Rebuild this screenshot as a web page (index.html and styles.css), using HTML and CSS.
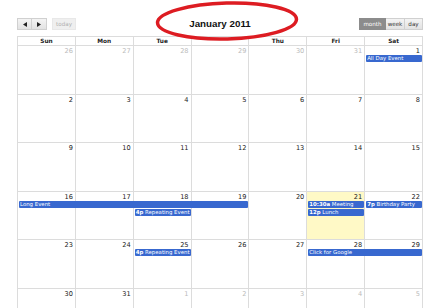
FILE: index.html
```html
<!DOCTYPE html>
<html lang="en">
<head>
    <meta charset="UTF-8">
    <title>Calendar</title>
    <link rel="stylesheet" href="styles.css">
</head>
<body>
    <div class="calendar">
        <div class="toolbar">
            <div class="toolbar-left">
                <span class="btn-group">
                    <span class="btn"><svg width="4" height="5" viewBox="0 0 4 5"><polygon points="4,0 4,5 0,2.5" fill="#222"/></svg></span>
                    <span class="btn"><svg width="4" height="5" viewBox="0 0 4 5"><polygon points="0,0 0,5 4,2.5" fill="#222"/></svg></span>
                </span>
                <span class="btn btn-today">today</span>
            </div>
            <div class="title-wrap">
                <h2 class="title">January 2011</h2>
                <!-- red marker circle drawn over the title -->
                <svg class="marker" width="146" height="42" viewBox="0 0 146 42">
                    <ellipse cx="72" cy="20" rx="69.5" ry="18" fill="none" stroke="#dd1c22" stroke-width="3.5" transform="rotate(-1.5 72 20)"/>
                </svg>
            </div>
            <div class="toolbar-right">
                <span class="btn-group">
                    <span class="btn btn-month active">month</span>
                    <span class="btn btn-week">week</span>
                    <span class="btn btn-day">day</span>
                </span>
            </div>
        </div>

        <div class="month">
            <div class="day-names">
                <div class="day-name">Sun</div>
                <div class="day-name">Mon</div>
                <div class="day-name">Tue</div>
                <div class="day-name"></div>
                <div class="day-name">Thu</div>
                <div class="day-name">Fri</div>
                <div class="day-name">Sat</div>
            </div>

            <div class="week">
                <div class="day other">26</div>
                <div class="day other">27</div>
                <div class="day other">28</div>
                <div class="day other">29</div>
                <div class="day other">30</div>
                <div class="day other">31</div>
                <div class="day">1</div>
                <div class="event row-1" style="grid-column: 7 / span 1;">All Day Event</div>
            </div>

            <div class="week">
                <div class="day">2</div>
                <div class="day">3</div>
                <div class="day">4</div>
                <div class="day">5</div>
                <div class="day">6</div>
                <div class="day">7</div>
                <div class="day">8</div>
            </div>

            <div class="week">
                <div class="day">9</div>
                <div class="day">10</div>
                <div class="day">11</div>
                <div class="day">12</div>
                <div class="day">13</div>
                <div class="day">14</div>
                <div class="day">15</div>
            </div>

            <div class="week">
                <div class="day">16</div>
                <div class="day">17</div>
                <div class="day">18</div>
                <div class="day">19</div>
                <div class="day">20</div>
                <div class="day today">21</div>
                <div class="day">22</div>
                <div class="event row-1" style="grid-column: 1 / span 4;">Long Event</div>
                <div class="event row-2" style="grid-column: 3 / span 1;"><b>4p</b> Repeating Event</div>
                <div class="event row-1" style="grid-column: 6 / span 1;"><b>10:30a</b> Meeting</div>
                <div class="event row-2" style="grid-column: 6 / span 1;"><b>12p</b> Lunch</div>
                <div class="event row-1" style="grid-column: 7 / span 1;"><b>7p</b> Birthday Party</div>
            </div>

            <div class="week">
                <div class="day">23</div>
                <div class="day">24</div>
                <div class="day">25</div>
                <div class="day">26</div>
                <div class="day">27</div>
                <div class="day">28</div>
                <div class="day">29</div>
                <div class="event row-1" style="grid-column: 3 / span 1;"><b>4p</b> Repeating Event</div>
                <div class="event row-1" style="grid-column: 6 / span 2;">Click for Google</div>
            </div>

            <div class="week">
                <div class="day">30</div>
                <div class="day">31</div>
                <div class="day other">1</div>
                <div class="day other">2</div>
                <div class="day other">3</div>
                <div class="day other">4</div>
                <div class="day other">5</div>
            </div>
        </div>
    </div>
</body>
</html>
```

FILE: styles.css
```css
body {
    margin: 0;
    background-color: #fff;
    font-family: 'DejaVu Sans', sans-serif;
    color: #222;
    overflow: hidden;
}

.calendar {
    padding: 18px 17px 0 17px;
}

/* Toolbar */
.toolbar {
    display: grid;
    grid-template-columns: 1fr auto 1fr;
    align-items: center;
    height: 12px;
    margin-bottom: 6px;
}

.toolbar-left {
    display: flex;
    gap: 5px;
}

.toolbar-right {
    display: flex;
    justify-content: flex-end;
}

.btn-group {
    display: flex;
}

.btn {
    display: flex;
    align-items: center;
    justify-content: center;
    box-sizing: border-box;
    height: 12px;
    width: 15px;
    background: linear-gradient(#f4f4f4, #e2e2e2);
    border: 1px solid #d0d0d0;
    font-size: 5.6px;
    color: #333;
}

.btn-group .btn + .btn {
    border-left: none;
}

.btn-today {
    width: 24px;
    color: #b0b0b0;
    background: #efefef;
    border-color: #e8e8e8;
}

.btn-month { width: 27px; }
.btn-week { width: 19px; }
.btn-day { width: 18px; }

.btn.active {
    background: #8c8c8c;
    border-color: #8c8c8c;
    color: #fff;
}

.title-wrap {
    position: relative;
}

.title {
    margin: 0;
    font-family: 'Liberation Sans', Arial, sans-serif;
    font-size: 9.8px;
    font-weight: bold;
    line-height: 12px;
    color: #111;
}

.marker {
    position: absolute;
    left: -34px;
    top: -17px;
}

/* Month grid */
.month {
    border-top: 1px solid #dcdcdc;
    border-left: 1px solid #dcdcdc;
}

.day-names {
    display: grid;
    grid-template-columns: repeat(7, 1fr);
}

.day-name {
    height: 8px;
    border-right: 1px solid #dcdcdc;
    border-bottom: 1px solid #dcdcdc;
    text-align: center;
    font-size: 5.8px;
    font-weight: bold;
    line-height: 8px;
    color: #222;
}

.week {
    display: grid;
    grid-template-columns: repeat(7, 1fr);
    grid-template-rows: 9px 8px 8px 1fr;
    height: 48.6px;
}

.day {
    grid-row: 1 / -1;
    border-right: 1px solid #dcdcdc;
    border-bottom: 1px solid #dcdcdc;
    padding: 1px 2px 0 0;
    text-align: right;
    font-size: 6.6px;
    line-height: 8px;
    color: #222;
}

.day:nth-child(1) { grid-column: 1; }
.day:nth-child(2) { grid-column: 2; }
.day:nth-child(3) { grid-column: 3; }
.day:nth-child(4) { grid-column: 4; }
.day:nth-child(5) { grid-column: 5; }
.day:nth-child(6) { grid-column: 6; }
.day:nth-child(7) { grid-column: 7; }

.day.other {
    color: #bbb;
}

.day.today {
    background-color: #fff9c6;
}

.event {
    height: 7px;
    margin: 0 1px 0 1px;
    padding-left: 1px;
    background-color: #3868cf;
    border-radius: 1px;
    color: #fff;
    font-size: 5.4px;
    line-height: 7px;
    white-space: nowrap;
    overflow: hidden;
}

.row-1 { grid-row: 2; }
.row-2 { grid-row: 3; }
```
